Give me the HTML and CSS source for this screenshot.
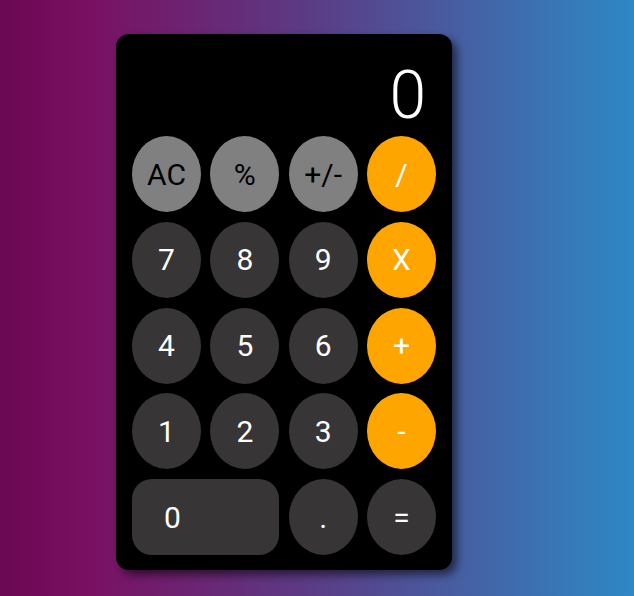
FILE: index.html
```html
<!DOCTYPE html>
<html>
<head>
<meta charset="utf-8">
<link rel="stylesheet" href="styles.css">
</head>
<body>
<div class="calc">
  <div class="display">0</div>
  <div class="keys">
    <button class="key light">AC</button>
    <button class="key light">%</button>
    <button class="key light">+/-</button>
    <button class="key op">/</button>
    <button class="key">7</button>
    <button class="key">8</button>
    <button class="key">9</button>
    <button class="key op">X</button>
    <button class="key">4</button>
    <button class="key">5</button>
    <button class="key">6</button>
    <button class="key op">+</button>
    <button class="key">1</button>
    <button class="key">2</button>
    <button class="key">3</button>
    <button class="key op">-</button>
    <button class="key zero">0</button>
    <button class="key">.</button>
    <button class="key">=</button>
  </div>
</div>
</body>
</html>
```
FILE: styles.css
```css
html, body {
  margin: 0;
  height: 100%;
}
body {
  background: linear-gradient(to right, #6a0852 0%, #7a1062 14%, #5a3d86 50%, #2e88c5 100%);
  font-family: Roboto, "Liberation Sans", sans-serif;
  padding-top: 34px;
  box-sizing: border-box;
}
.calc {
  margin-left: 116px;
  width: 336px;
  height: 536px;
  box-sizing: border-box;
  background: #000;
  border-radius: 13px;
  box-shadow: 5px 5px 8px rgba(0, 0, 0, 0.55);
  padding: 0 16px 15px;
  display: flex;
  flex-direction: column;
}
.display {
  height: 102px;
  box-sizing: border-box;
  color: #fff;
  font-size: 66px;
  font-weight: 300;
  text-align: right;
  padding: 29px 10px 0 0;
  line-height: 1;
}
.keys {
  display: grid;
  grid-template-columns: repeat(4, 1fr);
  grid-auto-rows: 76px;
  column-gap: 9.33px;
  row-gap: 9.75px;
}
.key {
  border: none;
  border-radius: 50%;
  background: #373535;
  color: #fff;
  font-family: Roboto, "Liberation Sans", sans-serif;
  font-size: 30px;
  padding: 0;
}
.light {
  background: #808080;
  color: #000;
}
.op {
  background: #ffa500;
  color: #fff;
}
.zero {
  grid-column: span 2;
  border-radius: 20px;
  text-align: left;
  padding-left: 32px;
}
```
